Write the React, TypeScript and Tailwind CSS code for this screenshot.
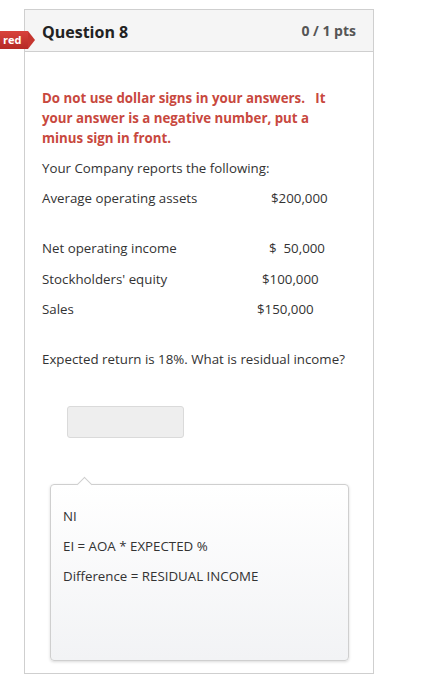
const font = { fontFamily: '"Open Sans", "Liberation Sans", sans-serif' };

const rows = [
  { label: "Net operating income", value: "$  50,000", pad: "pl-[227px]" },
  { label: "Stockholders' equity", value: "$100,000", pad: "pl-[220px]" },
  { label: "Sales", value: "$150,000", pad: "pl-[215px]" },
];

export default function App() {
  return (
    <div className="relative w-[447px] h-[700px] bg-white text-[#333]" style={font}>
      {/* status flag */}
      <div className="absolute left-0 top-[22px] flex h-[18px] items-center">
        <div className="h-[18px] w-[28px] bg-gradient-to-b from-[#d9423c] to-[#b52a25] pl-[3px] text-[11px] font-bold leading-[18px] text-white">
          red
        </div>
        <div className="h-0 w-0 border-y-[9px] border-l-[7px] border-y-transparent border-l-[#c5352f]" />
      </div>

      <div className="ml-[24px] mt-[9px] w-[350px] border border-[#cfcfcf]">
        <div className="flex h-[42px] items-center justify-between border-b border-[#cfcfcf] bg-[#f5f5f5] pl-[17px] pr-[17px]">
          <span className="pt-[3px] text-[16px] font-bold text-[#222]">Question 8</span>
          <span className="text-[14px] font-bold text-[#555]">0 / 1 pts</span>
        </div>

        <div className="px-[17px] pt-[36px] pb-[12px] text-[13.3px]">
          <p className="w-[300px] text-[13.3px] font-bold leading-[20px] text-[#c8483e]">
            Do not use dollar signs in your answers.&nbsp;&nbsp; It your answer is a negative number, put a minus sign in front.
          </p>
          <p className="mt-[10px] leading-[20px]">Your Company reports the following:</p>
          <div className="mt-[10px] flex leading-[20px]">
            <span className="w-[229px]">Average operating assets</span>
            <span>$200,000</span>
          </div>
          <div className="mt-[30px] flex flex-col gap-[10.5px] leading-[20px]">
            {rows.map((r) => (
              <div key={r.label} className="flex">
                <span className="w-[0px] whitespace-nowrap">{r.label}</span>
                <span className={`${r.pad} whitespace-pre`}>{r.value}</span>
              </div>
            ))}
          </div>
          <p className="mt-[30px] leading-[20px]">Expected return is 18%. What is residual income?</p>

          <div className="ml-[25px] mt-[37px] h-[32px] w-[117px] rounded-[3px] border border-[#dadada] bg-[#eeeeee]" />

          <div className="relative ml-[8px] mt-[46px] h-[177px] w-[299px] rounded-[4px] border border-[#cfcfcf] bg-gradient-to-b from-white to-[#f2f3f5] pl-[12px] pt-[21px] shadow-[0_1px_3px_rgba(0,0,0,0.15)]">
            <div className="absolute left-[28px] top-[-6px] h-[11px] w-[11px] rotate-45 border-l border-t border-[#cfcfcf] bg-white" />
            <p className="leading-[20px]">NI</p>
            <p className="mt-[10px] leading-[20px]">EI = AOA * EXPECTED %</p>
            <p className="mt-[10px] leading-[20px]">Difference = RESIDUAL INCOME</p>
          </div>
        </div>
      </div>
    </div>
  );
}
